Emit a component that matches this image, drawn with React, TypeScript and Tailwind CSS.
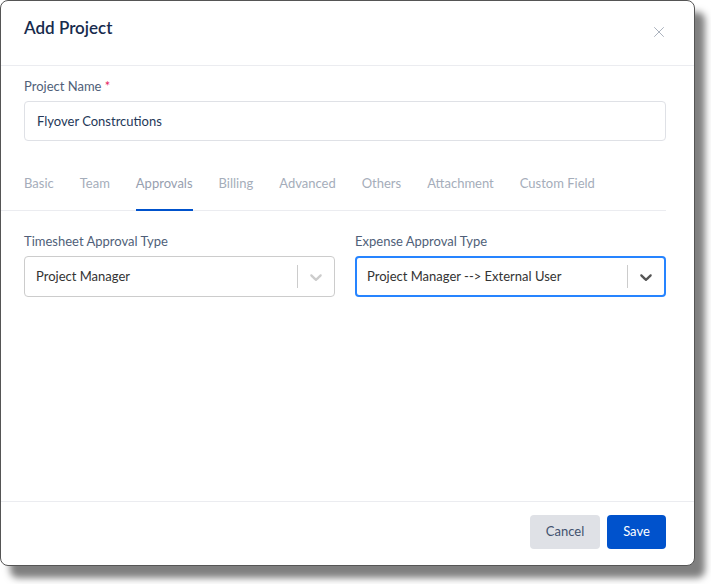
import { X } from "lucide-react";

const tabs = ["Basic", "Team", "Approvals", "Billing", "Advanced", "Others", "Attachment", "Custom Field"];

function Chevron({ className }: { className?: string }) {
    return (
        <svg viewBox="0 0 20 20" className={className} fill="currentColor">
            <path d="M4.516 7.548c0.436-0.446 1.043-0.481 1.576 0l3.908 3.747 3.908-3.747c0.533-0.481 1.141-0.446 1.574 0 0.436 0.445 0.408 1.197 0 1.615-0.406 0.418-4.695 4.502-4.695 4.502-0.217 0.223-0.502 0.335-0.787 0.335s-0.57-0.112-0.789-0.335c0 0-4.287-4.084-4.695-4.502s-0.436-1.17 0-1.615z" />
        </svg>
    );
}

function SelectBox({ value, focused }: { value: string; focused?: boolean }) {
    return (
        <div
            className={
                focused
                    ? "flex h-[41px] items-center rounded-[4px] border-2 border-[#2684ff] bg-white pl-[10px]"
                    : "flex h-[41px] items-center rounded-[4px] border border-[#cccccc] bg-white pl-[11px]"
            }
        >
            <span className="flex-1 truncate text-[13px] text-[#333333]">{value}</span>
            <span className="h-[23px] w-px bg-[#cccccc]" />
            <span className={focused ? "flex w-[36px] justify-center pr-[1px] text-[#555555]" : "flex w-[36px] justify-center text-[#cccccc]"}>
                <Chevron className="h-5 w-5" />
            </span>
        </div>
    );
}

export default function App() {
    return (
        <div className="h-[584px] w-[711px] bg-white font-['Lato','Noto_Sans',sans-serif]">
            <div className="flex h-[566px] w-[695px] flex-col rounded-[8px] border border-[#555555] bg-white shadow-[10px_12px_7px_rgba(0,0,0,0.5)]">
                {/* header */}
                <div className="flex h-[65px] shrink-0 items-start justify-between border-b border-[#ebecf0] pl-[23px] pr-[26px] pt-[16px]">
                    <h2 className="text-[17px] font-semibold leading-[22px] text-[#172b4d]">Add Project</h2>
                    <X className="mt-[6px] h-[18px] w-[18px] text-[#a5adba]" strokeWidth={1.25} />
                </div>

                {/* body */}
                <div className="flex-1 pl-[23px] pr-[28px] pt-[11px]">
                    <label className="mb-[6px] block text-[13px] leading-[18px] text-[#505f79]">
                        Project Name <span className="text-[#e5245e]">*</span>
                    </label>
                    <div className="flex h-[40px] items-center rounded-[4px] border border-[#dfe1e6] px-[12px] pt-px text-[13px] text-[#253858]">
                        Flyover Constrcutions
                    </div>

                    <div className="-ml-[23px] mt-[20px] flex border-b border-[#ebecf0] pl-[23px]">
                        {tabs.map((t) => (
                            <div
                                key={t}
                                className={
                                    t === "Approvals"
                                        ? "-mb-px mr-[26px] h-[50px] border-b-2 border-[#0052cc] pt-[13px] text-[13px] leading-[18px] text-[#97a0af]"
                                        : "-mb-px mr-[26px] h-[50px] pt-[13px] text-[13px] leading-[18px] text-[#a5adba]"
                                }
                            >
                                {t}
                            </div>
                        ))}
                    </div>

                    <div className="grid grid-cols-2 gap-[20px] pt-[21px]">
                        <div>
                            <label className="mb-[6px] block text-[13px] leading-[18px] text-[#505f79]">Timesheet Approval Type</label>
                            <SelectBox value="Project Manager" />
                        </div>
                        <div>
                            <label className="mb-[6px] block text-[13px] leading-[18px] text-[#505f79]">Expense Approval Type</label>
                            <SelectBox value="Project Manager --> External User" focused />
                        </div>
                    </div>
                </div>

                {/* footer */}
                <div className="flex h-[64px] shrink-0 items-start justify-end gap-[7px] border-t border-[#ebecf0] pr-[28px] pt-[13px]">
                    <button className="h-[34px] w-[70px] rounded-[4px] bg-[#dfe1e6] text-[13px] text-[#42526e]">Cancel</button>
                    <button className="h-[34px] w-[59px] rounded-[4px] bg-[#0052cc] text-[13px] text-white">Save</button>
                </div>
            </div>
        </div>
    );
}
